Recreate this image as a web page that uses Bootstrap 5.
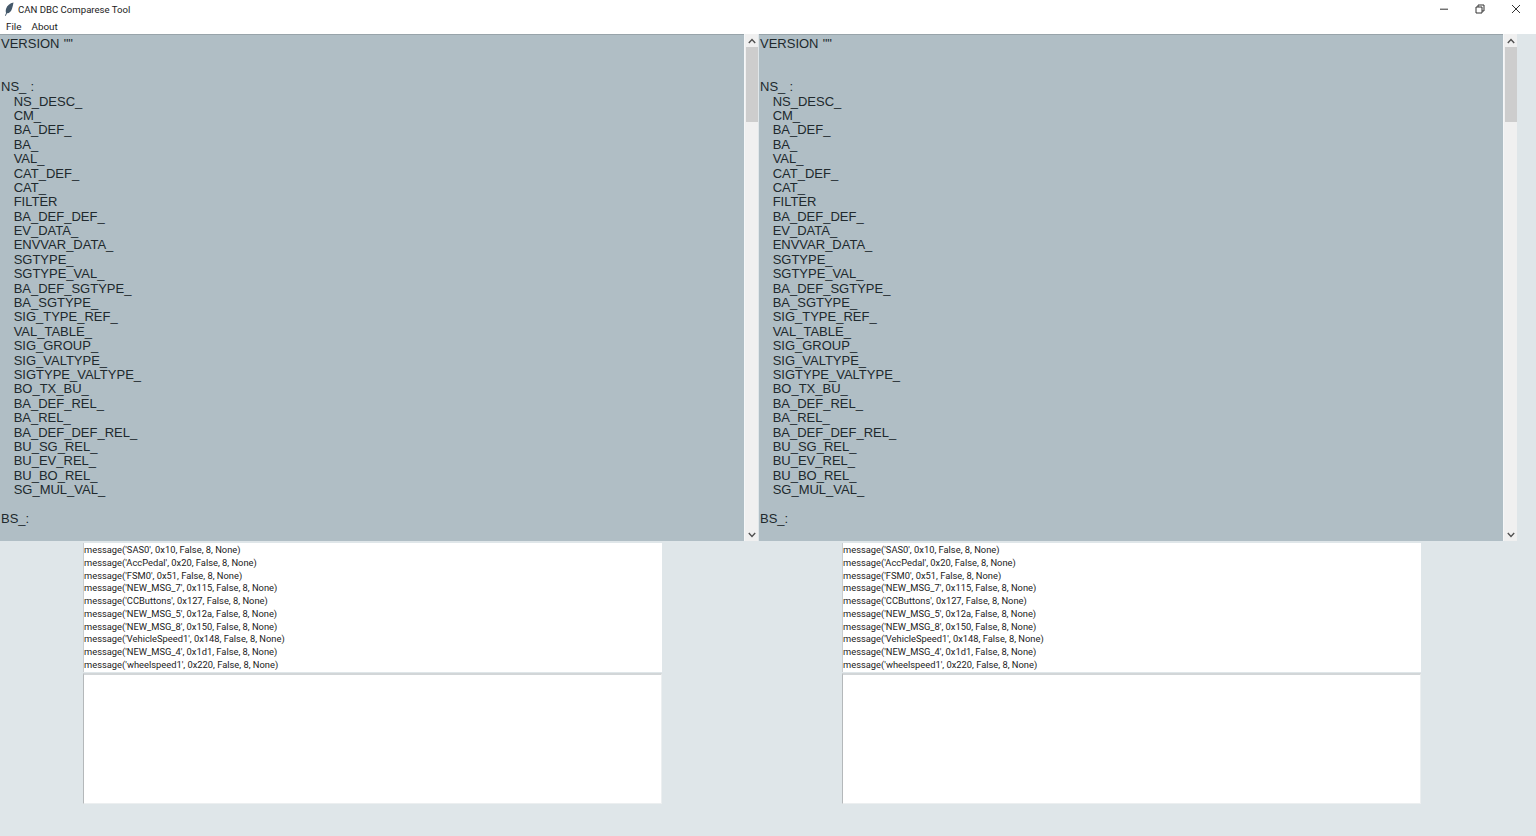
<!DOCTYPE html>
<html lang="en">
<head>
<meta charset="utf-8">
<title>CAN DBC Comparese Tool</title>
<link href="https://cdn.jsdelivr.net/npm/bootstrap@5.3.0/dist/css/bootstrap.min.css" rel="stylesheet">
<style>
html,body{height:836px;overflow:hidden}
body{background:#dfe6e9;font-family:Roboto,"Noto Sans",sans-serif;color:#1c1c1c}
.title-strip{height:17px;background:#fff;font-size:9.6px;line-height:18px}
.title-strip .app-name{margin-left:4px;margin-top:2px}
.feather{width:10px;height:14px;margin-left:4px}
.win-btn{width:36px;height:17px}
.win-group{margin-right:2px}
.menu-strip{height:17px;background:#fff;font-size:9.9px;line-height:20px;padding-left:6px;gap:10px}
.pane{width:759px}
.viewer{height:507px;width:745px;background:#b0bec5;border-top:1px solid #98a4aa;overflow:hidden}
.viewer pre{margin:0;padding:2px 0 0 1px;font-family:"Liberation Sans",sans-serif;font-size:13px;line-height:14.39px;word-spacing:.6px;color:#20292d;overflow:visible}
.scroll-track{width:14px;height:507px;background:#f0f0f0;margin-left:-1px;border-left:1px solid #f5f7f8}
.scroll-arrow{height:13px}
.scroll-thumb{height:75px;background:#cdcdcd;margin-left:1px}
.scroll-gap{flex:1}
.msg-list{margin:2px 0 0 83px;width:579px;height:129px;background:#fff;border-left:1px solid #c9cdcf;font-size:9.34px;line-height:12.78px;padding:1px 0 0;color:#222;list-style:none}
.msg-list li{white-space:nowrap}
.msg-detail{margin:1px 0 0 83px;width:579px;height:131px;background:#fff;border-left:1px solid #b4b8ba;border-top:2px solid #d2d6d8;border-right:1px solid #eceff0;border-bottom:1px solid #eceff0}
</style>
</head>
<body>
<div class="title-strip d-flex align-items-center">
  <svg class="feather" viewBox="0 0 10 14" aria-hidden="true"><path d="M9.5 .5C6 1 3 3.5 2 7c-.4 1.6-.3 3 .1 4L1 13.6l.7.3L3 11.3c2 .3 4-1.5 5-4.5C8.7 4.5 9.2 2.5 9.5 .5z" fill="#44586a"/></svg>
  <span class="app-name flex-grow-1">CAN DBC Comparese Tool</span>
  <div class="d-flex win-group">
    <div class="win-btn d-flex align-items-center justify-content-center"><svg width="10" height="10" viewBox="0 0 10 10"><path d="M1 5.2h8" stroke="#333" stroke-width="1"/></svg></div>
    <div class="win-btn d-flex align-items-center justify-content-center"><svg width="10" height="10" viewBox="0 0 10 10" fill="none" stroke="#333" stroke-width="1"><path d="M1 3h6v6H1z"/><path d="M3 3V1h6v6H7"/></svg></div>
    <div class="win-btn d-flex align-items-center justify-content-center"><svg width="10" height="10" viewBox="0 0 10 10"><path d="M1 1l8 8M9 1l-8 8" stroke="#333" stroke-width="1"/></svg></div>
  </div>
</div>
<nav class="menu-strip d-flex"><span>File</span><span>About</span></nav>
<main class="d-flex">
  <section class="pane">
    <div class="d-flex">
      <div class="viewer"><pre>VERSION ""


NS_ :
   NS_DESC_
   CM_
   BA_DEF_
   BA_
   VAL_
   CAT_DEF_
   CAT_
   FILTER
   BA_DEF_DEF_
   EV_DATA_
   ENVVAR_DATA_
   SGTYPE_
   SGTYPE_VAL_
   BA_DEF_SGTYPE_
   BA_SGTYPE_
   SIG_TYPE_REF_
   VAL_TABLE_
   SIG_GROUP_
   SIG_VALTYPE_
   SIGTYPE_VALTYPE_
   BO_TX_BU_
   BA_DEF_REL_
   BA_REL_
   BA_DEF_DEF_REL_
   BU_SG_REL_
   BU_EV_REL_
   BU_BO_REL_
   SG_MUL_VAL_

BS_:</pre></div>
      <div class="scroll-track d-flex flex-column">
        <div class="scroll-arrow d-flex align-items-center justify-content-center"><svg width="8" height="6" viewBox="0 0 8 6"><path d="M.8 5L4 1.6 7.2 5" fill="none" stroke="#505050" stroke-width="1.4"/></svg></div>
        <div class="scroll-thumb"></div>
        <div class="scroll-gap"></div>
        <div class="scroll-arrow d-flex align-items-center justify-content-center"><svg width="8" height="6" viewBox="0 0 8 6"><path d="M.8 1L4 4.4 7.2 1" fill="none" stroke="#505050" stroke-width="1.4"/></svg></div>
      </div>
    </div>
    <ul class="msg-list">
      <li>message('SAS0', 0x10, False, 8, None)</li>
      <li>message('AccPedal', 0x20, False, 8, None)</li>
      <li>message('FSM0', 0x51, False, 8, None)</li>
      <li>message('NEW_MSG_7', 0x115, False, 8, None)</li>
      <li>message('CCButtons', 0x127, False, 8, None)</li>
      <li>message('NEW_MSG_5', 0x12a, False, 8, None)</li>
      <li>message('NEW_MSG_8', 0x150, False, 8, None)</li>
      <li>message('VehicleSpeed1', 0x148, False, 8, None)</li>
      <li>message('NEW_MSG_4', 0x1d1, False, 8, None)</li>
      <li>message('wheelspeed1', 0x220, False, 8, None)</li>
    </ul>
    <div class="msg-detail"></div>
  </section>
  <section class="pane">
    <div class="d-flex">
      <div class="viewer"><pre>VERSION ""


NS_ :
   NS_DESC_
   CM_
   BA_DEF_
   BA_
   VAL_
   CAT_DEF_
   CAT_
   FILTER
   BA_DEF_DEF_
   EV_DATA_
   ENVVAR_DATA_
   SGTYPE_
   SGTYPE_VAL_
   BA_DEF_SGTYPE_
   BA_SGTYPE_
   SIG_TYPE_REF_
   VAL_TABLE_
   SIG_GROUP_
   SIG_VALTYPE_
   SIGTYPE_VALTYPE_
   BO_TX_BU_
   BA_DEF_REL_
   BA_REL_
   BA_DEF_DEF_REL_
   BU_SG_REL_
   BU_EV_REL_
   BU_BO_REL_
   SG_MUL_VAL_

BS_:</pre></div>
      <div class="scroll-track d-flex flex-column">
        <div class="scroll-arrow d-flex align-items-center justify-content-center"><svg width="8" height="6" viewBox="0 0 8 6"><path d="M.8 5L4 1.6 7.2 5" fill="none" stroke="#505050" stroke-width="1.4"/></svg></div>
        <div class="scroll-thumb"></div>
        <div class="scroll-gap"></div>
        <div class="scroll-arrow d-flex align-items-center justify-content-center"><svg width="8" height="6" viewBox="0 0 8 6"><path d="M.8 1L4 4.4 7.2 1" fill="none" stroke="#505050" stroke-width="1.4"/></svg></div>
      </div>
    </div>
    <ul class="msg-list">
      <li>message('SAS0', 0x10, False, 8, None)</li>
      <li>message('AccPedal', 0x20, False, 8, None)</li>
      <li>message('FSM0', 0x51, False, 8, None)</li>
      <li>message('NEW_MSG_7', 0x115, False, 8, None)</li>
      <li>message('CCButtons', 0x127, False, 8, None)</li>
      <li>message('NEW_MSG_5', 0x12a, False, 8, None)</li>
      <li>message('NEW_MSG_8', 0x150, False, 8, None)</li>
      <li>message('VehicleSpeed1', 0x148, False, 8, None)</li>
      <li>message('NEW_MSG_4', 0x1d1, False, 8, None)</li>
      <li>message('wheelspeed1', 0x220, False, 8, None)</li>
    </ul>
    <div class="msg-detail"></div>
  </section>
</main>
<script src="https://cdn.jsdelivr.net/npm/bootstrap@5.3.0/dist/js/bootstrap.bundle.min.js"></script>
</body>
</html>
